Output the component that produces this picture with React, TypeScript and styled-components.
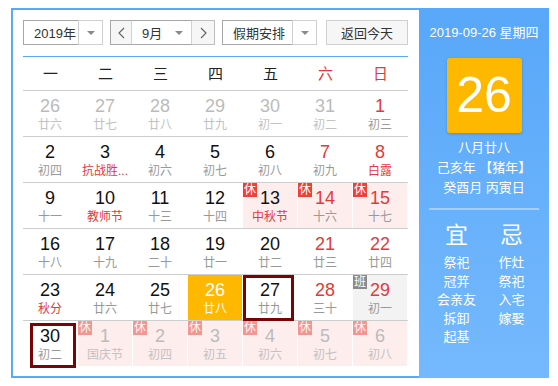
import React from "react";
import styled, { createGlobalStyle, css } from "styled-components";

const GlobalStyle = createGlobalStyle`
  html, body { margin: 0; padding: 0; background: #fff; }
  body { font-family: "Liberation Sans", "Noto Sans CJK SC", sans-serif; }
`;

const BLUE = "#5aa9f9";
const RED = "#e4393a";

const Widget = styled.div`
  display: flex;
  margin: 8px 0 0 11px;
  width: 538px;
  height: 370px;
`;

const Main = styled.div`
  box-sizing: border-box;
  width: 408px;
  height: 370px;
  border: 2px solid ${BLUE};
  border-right: none;
  padding: 10px 11px 10px 10px;
  background: #fff;
`;

const Toolbar = styled.div`
  display: flex;
  align-items: stretch;
  height: 25px;
  padding-bottom: 11px;
  border-bottom: 1px solid ${BLUE};
`;

const SelectBox = styled.div<{ $w: number; $ml?: number }>`
  display: flex;
  width: ${(p) => p.$w}px;
  margin-left: ${(p) => p.$ml ?? 0}px;
  height: 25px;
  box-sizing: border-box;
  font-size: 13px;
  color: #333;
`;

const SelectLabel = styled.div<{ $pl: number }>`
  flex: 1;
  min-width: 0;
  display: flex;
  align-items: center;
  justify-content: space-between;
  white-space: nowrap;
  padding: 0 0 0 ${(p) => p.$pl}px;
  border: 1px solid #a6a6a6;
  border-right: none;
  background: #fff;
`;

const ArrowCell = styled.div<{ $w: number }>`
  width: ${(p) => p.$w}px;
  flex: none;
  display: flex;
  align-items: center;
  justify-content: center;
  border: 1px solid #cfcfcf;
  box-sizing: border-box;
  background: #fff;
`;

const NavCell = styled.div<{ $w: number; $side: "l" | "r" }>`
  width: ${(p) => p.$w}px;
  flex: none;
  display: flex;
  align-items: center;
  justify-content: center;
  box-sizing: border-box;
  background: #f6f6f6;
  border: 1px solid #a6a6a6;
  ${(p) =>
    p.$side === "l"
      ? css`border-right: 1px solid #d2d2d2;`
      : css`border-left: none; border-color: #bdbdbd;`}
`;

const MonthLabel = styled(SelectLabel)`
  border-left: none;
  border-right: 1px solid #d2d2d2;
  padding-right: 8px;
`;

const Caret = styled.span`
  width: 0;
  height: 0;
  border-left: 4px solid transparent;
  border-right: 4px solid transparent;
  border-top: 4px solid #8a8a8a;
`;

const TodayButton = styled.button`
  margin-left: 9px;
  width: 82px;
  height: 25px;
  box-sizing: border-box;
  border: 1px solid #cfcfcf;
  background: #f6f6f6;
  color: #333;
  font-family: inherit;
  font-size: 13px;
  padding: 0;
  white-space: nowrap;
  cursor: pointer;
`;

const WeekHeader = styled.div`
  display: grid;
  grid-template-columns: repeat(7, 55px);
  height: 33px;
  border-bottom: 1px solid #cdcdcd;
`;

const WeekName = styled.div<{ $red?: boolean }>`
  text-align: center;
  line-height: 33px;
  font-size: 15px;
  color: ${(p) => (p.$red ? RED : "#222")};
`;

const WeekRow = styled.div<{ $last?: boolean }>`
  display: grid;
  grid-template-columns: repeat(7, 55px);
  height: 45px;
  border-bottom: ${(p) => (p.$last ? "none" : "1px solid #cdcdcd")};
`;

type Bg = "none" | "rest" | "work" | "today";

const bgColor: Record<Bg, string> = {
  none: "transparent",
  rest: "#fdeded",
  work: "#f3f3f3",
  today: "#ffb800",
};

const Cell = styled.div<{ $bg: Bg }>`
  position: relative;
  width: 54px;
  height: 45px;
  background: ${(p) => bgColor[p.$bg]};
  text-align: center;
`;

type Tone = "normal" | "other" | "red" | "today";

const numColor: Record<Tone, string> = {
  normal: "#111",
  other: "#bbb",
  red: RED,
  today: "#fff",
};

const DayNum = styled.div<{ $tone: Tone }>`
  padding-top: 5px;
  line-height: 20px;
  font-size: 18px;
  color: ${(p) => numColor[p.$tone]};
`;

const lunarColor: Record<Tone, string> = {
  normal: "#999",
  other: "#c2c2c2",
  red: RED,
  today: "#fff",
};

const Lunar = styled.div<{ $tone: Tone }>`
  margin-top: 1px;
  line-height: 16px;
  font-size: 12px;
  white-space: nowrap;
  color: ${(p) => lunarColor[p.$tone]};
`;

const Badge = styled.span<{ $kind: "rest" | "work"; $faded?: boolean }>`
  position: absolute;
  top: 0;
  left: 0;
  width: 14px;
  height: 14px;
  line-height: 14px;
  font-size: 12px;
  text-align: center;
  color: #fff;
  background: ${(p) => (p.$kind === "rest" ? "#ee4034" : "#8a8a8a")};
  opacity: ${(p) => (p.$faded ? 0.5 : 1)};
`;

const SelFrame = styled.div<{ $x: number; $y: number; $w: number; $h: number }>`
  position: absolute;
  left: ${(p) => p.$x}px;
  top: ${(p) => p.$y}px;
  width: ${(p) => p.$w}px;
  height: ${(p) => p.$h}px;
  box-sizing: border-box;
  border: 3px solid #770505;
  pointer-events: none;
`;

const Side = styled.div`
  width: 130px;
  height: 370px;
  background: linear-gradient(180deg, #58a7f9 0%, #75b9fd 100%);
  color: #fff;
  text-align: center;
  display: flex;
  flex-direction: column;
  align-items: center;
  padding-top: 15px;
  box-sizing: border-box;
`;

const SideDate = styled.div`
  font-size: 13px;
  line-height: 20px;
  white-space: nowrap;
`;

const BigDay = styled.div`
  margin-top: 15px;
  width: 75px;
  height: 75px;
  border-radius: 3px;
  background: #ffb800;
  box-shadow: 0 1px 3px rgba(0, 0, 0, 0.18);
  font-size: 50px;
  line-height: 75px;
  color: #fff;
`;

const LunarInfo = styled.div<{ $first?: boolean }>`
  margin-top: ${(p) => (p.$first ? 5 : 0)}px;
  font-size: 13px;
  line-height: 20px;
  white-space: nowrap;
`;

const Divider = styled.div`
  margin-top: 10px;
  width: 110px;
  height: 2px;
  background: rgba(255, 255, 255, 0.4);
`;

const Almanac = styled.div`
  margin-top: 10px;
  display: grid;
  grid-template-columns: 55px 55px;
`;

const AlmanacCol = styled.div`
  display: flex;
  flex-direction: column;
  align-items: center;
`;

const AlmanacHead = styled.div`
  font-size: 23px;
  line-height: 30px;
  margin-bottom: 4px;
`;

const AlmanacItem = styled.div`
  font-size: 13px;
  line-height: 18.5px;
  white-space: nowrap;
`;

const ChevronLeft = () => (
  <svg width="7" height="12" viewBox="0 0 7 12">
    <polyline points="6,1 1,6 6,11" fill="none" stroke="#666" strokeWidth="1.2" />
  </svg>
);
const ChevronRight = () => (
  <svg width="7" height="12" viewBox="0 0 7 12">
    <polyline points="1,1 6,6 1,11" fill="none" stroke="#666" strokeWidth="1.2" />
  </svg>
);

type Day = {
  d: number;
  l: string;
  tone?: Tone;
  ltone?: Tone;
  bg?: Bg;
  badge?: "rest" | "work";
  faded?: boolean;
  sel?: { x: number; y: number; w: number; h: number };
};

const weeks: Day[][] = [
  [
    { d: 26, l: "廿六", tone: "other", ltone: "other" },
    { d: 27, l: "廿七", tone: "other", ltone: "other" },
    { d: 28, l: "廿八", tone: "other", ltone: "other" },
    { d: 29, l: "廿九", tone: "other", ltone: "other" },
    { d: 30, l: "初一", tone: "other", ltone: "other" },
    { d: 31, l: "初二", tone: "other", ltone: "other" },
    { d: 1, l: "初三", tone: "red" },
  ],
  [
    { d: 2, l: "初四" },
    { d: 3, l: "抗战胜...", ltone: "red" },
    { d: 4, l: "初六" },
    { d: 5, l: "初七" },
    { d: 6, l: "初八" },
    { d: 7, l: "初九", tone: "red" },
    { d: 8, l: "白露", tone: "red", ltone: "red" },
  ],
  [
    { d: 9, l: "十一" },
    { d: 10, l: "教师节", ltone: "red" },
    { d: 11, l: "十三" },
    { d: 12, l: "十四" },
    { d: 13, l: "中秋节", ltone: "red", bg: "rest", badge: "rest" },
    { d: 14, l: "十六", tone: "red", bg: "rest", badge: "rest" },
    { d: 15, l: "十七", tone: "red", bg: "rest", badge: "rest" },
  ],
  [
    { d: 16, l: "十八" },
    { d: 17, l: "十九" },
    { d: 18, l: "二十" },
    { d: 19, l: "廿一" },
    { d: 20, l: "廿二" },
    { d: 21, l: "廿三", tone: "red" },
    { d: 22, l: "廿四", tone: "red" },
  ],
  [
    { d: 23, l: "秋分", ltone: "red" },
    { d: 24, l: "廿六" },
    { d: 25, l: "廿七" },
    { d: 26, l: "廿八", tone: "today", ltone: "today", bg: "today" },
    { d: 27, l: "廿九", sel: { x: 0, y: 0, w: 51, h: 46 } },
    { d: 28, l: "三十", tone: "red" },
    { d: 29, l: "初一", tone: "red", bg: "work", badge: "work" },
  ],
  [
    { d: 30, l: "初二", sel: { x: 7, y: 2, w: 46, h: 45 } },
    { d: 1, l: "国庆节", tone: "other", ltone: "other", bg: "rest", badge: "rest", faded: true },
    { d: 2, l: "初四", tone: "other", ltone: "other", bg: "rest", badge: "rest", faded: true },
    { d: 3, l: "初五", tone: "other", ltone: "other", bg: "rest", badge: "rest", faded: true },
    { d: 4, l: "初六", tone: "other", ltone: "other", bg: "rest", badge: "rest", faded: true },
    { d: 5, l: "初七", tone: "other", ltone: "other", bg: "rest", badge: "rest", faded: true },
    { d: 6, l: "初八", tone: "other", ltone: "other", bg: "rest", badge: "rest", faded: true },
  ],
];

const weekNames = ["一", "二", "三", "四", "五", "六", "日"];
const yi = ["祭祀", "冠笄", "会亲友", "拆卸", "起基"];
const ji = ["作灶", "祭祀", "入宅", "嫁娶"];

export default function App() {
  return (
    <>
      <GlobalStyle />
      <Widget>
        <Main>
          <Toolbar>
            <SelectBox $w={80}>
              <SelectLabel $pl={10}>2019年</SelectLabel>
              <ArrowCell $w={25}>
                <Caret />
              </ArrowCell>
            </SelectBox>
            <SelectBox $w={105} $ml={7}>
              <NavCell $w={22} $side="l">
                <ChevronLeft />
              </NavCell>
              <MonthLabel $pl={10}>
                <span>9月</span>
                <Caret />
              </MonthLabel>
              <NavCell $w={23} $side="r">
                <ChevronRight />
              </NavCell>
            </SelectBox>
            <SelectBox $w={95} $ml={7}>
              <SelectLabel $pl={10}>假期安排</SelectLabel>
              <ArrowCell $w={25}>
                <Caret />
              </ArrowCell>
            </SelectBox>
            <TodayButton>返回今天</TodayButton>
          </Toolbar>
          <WeekHeader>
            {weekNames.map((n, i) => (
              <WeekName key={n} $red={i >= 5}>
                {n}
              </WeekName>
            ))}
          </WeekHeader>
          {weeks.map((w, wi) => (
            <WeekRow key={wi} $last={wi === weeks.length - 1}>
              {w.map((c, ci) => (
                <Cell key={ci} $bg={c.bg ?? "none"}>
                  {c.badge && (
                    <Badge $kind={c.badge} $faded={c.faded}>
                      {c.badge === "rest" ? "休" : "班"}
                    </Badge>
                  )}
                  <DayNum $tone={c.tone ?? "normal"}>{c.d}</DayNum>
                  <Lunar $tone={c.ltone ?? (c.tone === "red" ? "normal" : c.tone ?? "normal")}>{c.l}</Lunar>
                  {c.sel && <SelFrame $x={c.sel.x} $y={c.sel.y} $w={c.sel.w} $h={c.sel.h} />}
                </Cell>
              ))}
            </WeekRow>
          ))}
        </Main>
        <Side>
          <SideDate>2019-09-26 星期四</SideDate>
          <BigDay>26</BigDay>
          <LunarInfo $first>八月廿八</LunarInfo>
          <LunarInfo>己亥年 【猪年】</LunarInfo>
          <LunarInfo>癸酉月 丙寅日</LunarInfo>
          <Divider />
          <Almanac>
            <AlmanacCol>
              <AlmanacHead>宜</AlmanacHead>
              {yi.map((t) => (
                <AlmanacItem key={t}>{t}</AlmanacItem>
              ))}
            </AlmanacCol>
            <AlmanacCol>
              <AlmanacHead>忌</AlmanacHead>
              {ji.map((t) => (
                <AlmanacItem key={t}>{t}</AlmanacItem>
              ))}
            </AlmanacCol>
          </Almanac>
        </Side>
      </Widget>
    </>
  );
}
